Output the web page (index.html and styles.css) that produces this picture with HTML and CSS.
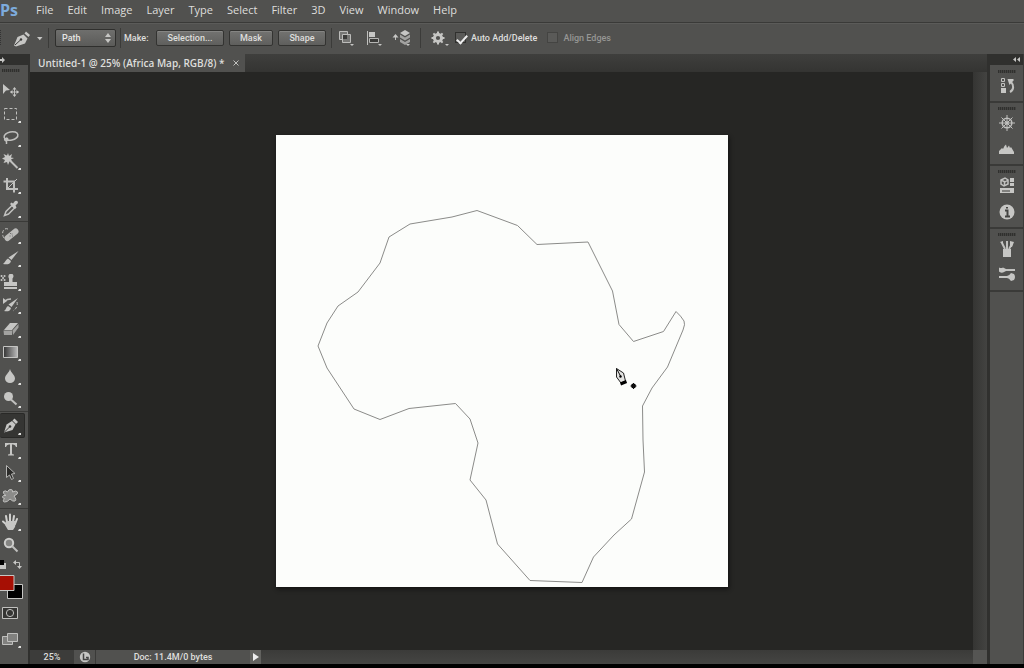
FILE: index.html
```html
<!DOCTYPE html>
<html lang="en">
<head>
<meta charset="utf-8">
<title>Untitled-1 @ 25%</title>
<link rel="stylesheet" href="styles.css">
</head>
<body>
<div class="app">
  <header class="menubar">
    <span class="logo">Ps</span>
    <nav class="menus">
      <button>File</button><button>Edit</button><button>Image</button><button>Layer</button><button>Type</button><button>Select</button><button>Filter</button><button>3D</button><button>View</button><button>Window</button><button>Help</button>
    </nav>
  </header>

  <div class="options">
    <button class="icon-btn current-tool" aria-label="Pen tool presets">
      <svg width="48" height="26" viewBox="0 0 48 26"><path class="grip" d="M0.5 5v16"/><path class="fill" d="M14 20.500l3.500-8.500 6-2.500 4 4-2.500 5-9 3z"/><path class="fill" d="M24.500 8.500l1.500-2 4 3.500-1.500 2z"/><path class="cut" d="M15 20l5.500-5"/><circle class="dark" cx="21" cy="14.500" r="1.200"/><path class="fill" d="M37 12h5.500l-2.700 3.200z"/></svg>
    </button>
    <span class="divider"></span>
    <select class="mode" aria-label="Pen mode"><option>Path</option></select>
    <svg class="stepper" width="6" height="10" viewBox="0 0 6 10"><path class="fill" d="M0 4l3-4 3 4zM0 6l3 4 3-4z"/></svg>
    <span class="divider thin"></span>
    <span class="make">Make:</span>
    <button class="push wide">Selection...</button>
    <button class="push">Mask</button>
    <button class="push shape">Shape</button>
    <span class="divider last"></span>
    <button class="icon-btn op" aria-label="Path operations">
      <svg width="28" height="24" viewBox="0 0 28 24"><path class="tile" d="M6.500 5.500h8v8h-8z"/><path class="tile" d="M9.500 8.500h8v8h-8z"/><path class="dark" d="M10 9h4v4h-4z"/><path class="fill" d="M17 18h4l-2 2z"/></svg>
    </button>
    <button class="icon-btn op" aria-label="Path alignment">
      <svg width="28" height="24" viewBox="0 0 28 24"><path class="line" d="M6.500 5v14"/><path class="fill" d="M8 6h6v5H8z"/><path class="dark edge" d="M8.500 12.500h9v4h-9z"/><path class="fill" d="M17 18h4l-2 2z"/></svg>
    </button>
    <button class="icon-btn op" aria-label="Path arrangement">
      <svg width="28" height="24" viewBox="0 0 28 24"><path class="fill" d="M11 7l5-3 5 3-5 3z"/><path class="mid-fill" d="M11 8.500l5 3 5-3v3l-5 3-5-3zM11 13l5 3 5-3v3l-5 3-5-3z"/><path class="line" d="M6.500 14v-4"/><path class="fill" d="M3.500 11.500l3-3.500 3 3.500z"/><path class="fill" d="M17 18h4l-2 2z"/></svg>
    </button>
    <span class="divider mid"></span>
    <button class="icon-btn op gear" aria-label="Path options">
      <svg width="28" height="24" viewBox="0 0 28 24"><g transform="translate(13 12)"><circle class="ring" r="3.600"/><path class="teeth" d="M0-6.500V-4M0 4V6.500M-6.500 0H-4M4 0H6.500M-4.600-4.600L-3-3M3 3L4.600 4.600M-4.600 4.600L-3 3M3-3L4.600-4.600"/></g><path class="fill" d="M20 18h4l-2 2z"/></svg>
    </button>
    <label class="check"><input type="checkbox" checked>Auto Add/Delete</label>
    <label class="check off"><input type="checkbox" disabled>Align Edges</label>
  </div>

  <div class="workspace">
    <aside class="tools" aria-label="Tools">
      <div class="tools-head"><svg width="5" height="6" viewBox="0 0 5 6"><path class="fill" d="M0 2h2V0l3 3-3 3V4H0z"/></svg></div>
      <div class="tools-grip"></div>
      <div class="group select-group">
        <button aria-label="Move"><svg viewBox="0 0 28 24"><path class="fill" d="M3 6l7 6-4 .5L3 16z"/><path class="line" d="M14.500 10v8M10.500 14h8"/><path class="fill" d="M14.500 9l2 2.500h-4zM14.500 19l2-2.500h-4zM10 14l2.500-2v4zM19 14l-2.500-2v4z"/></svg></button>
        <button aria-label="Marquee"><svg viewBox="0 0 28 24"><path class="line dashed" d="M4.500 6.500h12v11h-12z"/><path class="spot" d="M19 19h2v2h-3z"/></svg></button>
        <button aria-label="Lasso"><svg viewBox="0 0 28 24"><ellipse class="line bold" cx="11" cy="10" rx="7" ry="4.200" transform="rotate(-12 11 10)"/><path class="line bold" d="M5.500 12c-2 2 0 3.500 1.500 2.500s1-2-1-2.500M6.500 15v3"/><path class="spot" d="M19 19h2v2h-3z"/></svg></button>
        <button aria-label="Magic wand"><svg viewBox="0 0 28 24"><path class="fill" d="M8 4l1 3 3-2-1 3.500 3 .5-3 1.500 1.500 3-3-1L8 16l-1-3-3.500 1L5 11 2 9.500 5 8 3.500 5 7 6.500z"/><path class="line fat" d="M10.500 12l7 7"/><path class="spot" d="M19 19h2v2h-3z"/></svg></button>
        <button aria-label="Crop"><svg viewBox="0 0 28 24"><path class="line fat" d="M7 5v11h11M3.500 8.500H14v11"/><path class="line" d="M8 15l9-9"/><path class="spot" d="M19 19h2v2h-3z"/></svg></button>
        <button aria-label="Eyedropper"><svg viewBox="0 0 28 24"><path class="line bold" d="M4.500 18.500l1.500-4 6-6 2.500 2.500-6 6z"/><path class="fill" d="M10 7l1.500-1.500 1.500 1 2-2.500q3-1 3 2l-2.500 2.500 1 2L15 12z"/><path class="spot" d="M19 19h2v2h-3z"/></svg></button>
      </div>
      <div class="group paint-group">
        <button aria-label="Healing brush"><svg viewBox="0 0 28 24"><path class="line dashed" d="M8 6c-5-2-7 5-4 9"/><path class="band" d="M7.500 15l8-6.500"/><path class="dots" d="M10 13h.1M12 11h.1M12.500 13h.1M10.500 10.500h.1"/><path class="spot" d="M19 19h2v2h-3z"/></svg></button>
        <button aria-label="Brush"><svg viewBox="0 0 28 24"><path class="fill" d="M18.500 5l-7 9-3-2.500z"/><path class="fill" d="M8 12.500l3 2.500c-1 4-5 3.500-8 3 2-1 2.500-4.500 5-5.500z"/><path class="spot" d="M19 19h2v2h-3z"/></svg></button>
        <button aria-label="Clone stamp"><svg viewBox="0 0 28 24"><path class="fill" d="M9.500 4h3q2 2 0 4.500v3.500H17v4H4v-4h5V8.500Q7.500 6 9.500 4zM4 17h13v2H4z"/><path class="dots light" d="M1.500 6h.1M4.500 6h.1M3 8h.1M1.500 10h.1M4.500 10h.1"/><path class="spot" d="M19 19h2v2h-3z"/></svg></button>
        <button aria-label="History brush"><svg viewBox="0 0 28 24"><path class="fill" d="M18 5l-6.500 9-3-2.500z"/><path class="fill" d="M8 13l3 2c-1 4-4.500 3.500-7 3 2-1 2-4 4-5z"/><path class="line bold" d="M5 8c2-2 4-2 6-2"/><path class="fill" d="M3 5v6l4-3z"/><path class="line dashed" d="M17 9c1 4-1 7-4 9"/><path class="spot" d="M19 19h2v2h-3z"/></svg></button>
        <button aria-label="Eraser"><svg viewBox="0 0 28 24"><path class="fill" d="M10 6h8l-6 7H4z"/><path class="mid-fill" d="M3.500 13.500h8.500v4.500H4zM12.500 13.500l6-6.500v3.500L13 18z"/><path class="spot" d="M19 19h2v2h-3z"/></svg></button>
        <button aria-label="Gradient"><svg viewBox="0 0 28 24"><defs><linearGradient id="ramp"><stop offset="0" stop-color="#333"/><stop offset="1" stop-color="#bbb"/></linearGradient></defs><path d="M3.500 6.500h14v11h-14z" fill="url(#ramp)" stroke="#c4c4c2"/><path class="spot" d="M19 19h2v2h-3z"/></svg></button>
        <button aria-label="Blur"><svg viewBox="0 0 28 24"><path class="fill" d="M10 5c1 4 5 6 5 9.500a5 4.500 0 0 1-10 0C5 11 9 9 10 5z"/><path class="spot" d="M19 19h2v2h-3z"/></svg></button>
        <button aria-label="Dodge"><svg viewBox="0 0 28 24"><circle class="fill" cx="8.500" cy="9.500" r="4.500"/><path class="line fat" d="M11 12.500l5.500 5"/><path class="spot" d="M19 19h2v2h-3z"/></svg></button>
      </div>
      <div class="group vector-group">
        <button class="active" aria-label="Pen"><svg viewBox="0 0 28 24"><path class="fill" d="M4 18.500l2.500-8 5.500-3.500 3.500 3.500-3 5.500z"/><path class="fill" d="M12.500 6.500l2-2 3.500 3.500-2 2z"/><path class="cut" d="M4.500 18l5.500-5.500"/><circle class="dark" cx="10" cy="12.500" r="1.300"/><path class="spot" d="M19 19h2v2h-3z"/></svg></button>
        <button aria-label="Type"><svg viewBox="0 0 28 24"><path class="fill" d="M5 5h12v4h-1q-.5-2.500-3-2.500h-1v9q0 1 2 1v1H8v-1q2 0 2-1v-9H9q-2.500 0-3 2.500H5z"/><path class="spot" d="M19 19h2v2h-3z"/></svg></button>
        <button aria-label="Path selection"><svg viewBox="0 0 28 24"><path class="pointer" d="M6.500 4.500v12l3-2.500 2 4.500 2-1-2-4.500 3.500-.5z"/><path class="spot" d="M19 19h2v2h-3z"/></svg></button>
        <button aria-label="Custom shape"><svg viewBox="0 0 28 24"><path class="blob" d="M3.500 7.500q2-1.500 4 .5 1-3 3.500-2.500t1.500 2.500q4-2 5 0t-3.500 4q3 4 1 5t-5-2q-3 3.500-5.500 3T4.500 14.500Q2 14 2.500 12.500T6 11.500Q2 9 3.500 7.500z"/><path class="spot" d="M19 19h2v2h-3z"/></svg></button>
      </div>
      <div class="group view-group">
        <button aria-label="Hand"><svg viewBox="0 0 28 24"><path class="finger" d="M7 12L6 6M10 11V4.500M13 12l1-6M15 14l2-5M7 15l-4-3.500"/><path class="fill" d="M6 11h10l-1 6-2 3H8l-3-5z"/><path class="spot" d="M19 19h2v2h-3z"/></svg></button>
        <button aria-label="Zoom"><svg viewBox="0 0 28 24"><circle class="lens" cx="9" cy="10" r="4.200"/><path class="line fat" d="M12.500 13.500l5 5"/></svg></button>
      </div>
      <div class="color-box">
        <svg viewBox="0 0 28 42"><path class="fill" d="M2 5h4v6H0V7h2z"/><path d="M0 2h4v5H0z"/><path class="line" d="M15 4.500h4.500V9"/><path class="fill" d="M16 2v5l-3-2.500zM17 8h5l-2.500 3z"/><path class="swatch-line" d="M7.500 26.500h15v14h-15z" fill="#000"/><path class="swatch-line" d="M-2 17.500h16v15H-2z" fill="#a60f04"/></svg>
      </div>
      <button class="mode-btn" aria-label="Quick mask"><svg viewBox="0 0 28 24"><path class="mask-box" d="M2.500 6.500h15v11h-15z"/><circle class="line" cx="10" cy="12" r="3.600"/></svg></button>
      <button class="mode-btn" aria-label="Screen mode"><svg viewBox="0 0 28 24"><path class="screen" d="M2.500 9.500h10v8h-10z"/><path class="screen" d="M7.500 6.500h10v8h-10z"/><path class="spot" d="M19 19h2v2h-3z"/></svg></button>
    </aside>

    <main class="document">
      <div class="tabs"><div class="tab"><span>Untitled-1 @ 25% (Africa Map, RGB/8) *</span><button aria-label="Close"><svg width="6" height="6" viewBox="0 0 6 6"><path class="line" d="M.5.5l5 5M5.500.5l-5 5"/></svg></button></div></div>
      <div class="stage">
        <div class="pasteboard">
          <svg class="artboard" viewBox="276 135 452 452" role="img" aria-label="Outline of Africa">
            <path class="outline" d="M477 210.500L452 217 410 224 389 237 380 263 358 292 338 306 327 323 318 346 327 368 354 409 380 419.500 409 408.500 455.500 403.500 470 419 478 443 470 480 486 500 497.500 544 530 580.500 582 582.500 593.500 557 614 535 631.500 519 644.500 472 643 440 642.500 406 652 388 667.500 367 683 330Q685.500 324 684 321 681 316 676 311.500L663.500 331.500 633.500 341.500 619 324.500 612.500 291 588 242 537 244.500 517.500 225.500z"/>
            <path class="cursor" d="M616.500 368.500l7 4.500 2 8-4.500 2-4.500-6z"/><path class="cursor-line" d="M616.500 368.500l4 7.500"/><circle cx="620.500" cy="376.500" r="1.200"/><path class="cursor-base" d="M620.500 384l6-2.500"/>
            <circle cx="633.500" cy="386" r="2.400"/><path class="cursor-line" d="M630.500 386h6M633.500 383v6"/>
          </svg>
        </div>
        <div class="v-scroll"></div>
      </div>
      <footer class="status">
        <span class="zoom">25%</span>
        <button class="share" aria-label="Share"><svg width="12" height="12" viewBox="0 0 12 12"><circle cx="6" cy="6" r="5.200" class="fill"/><path class="badge-mark" d="M4.500 2.500v6h4.500V6.500H7"/></svg></button>
        <span class="doc">Doc: 11.4M/0 bytes</span>
        <button class="arrow" aria-label="Status options"><svg width="6" height="8" viewBox="0 0 6 8"><path class="bright" d="M0 0l6 4-6 4z"/></svg></button>
        <span class="h-scroll"></span><span class="corner"></span>
      </footer>
    </main>

    <aside class="panels" aria-label="Panels">
      <div class="panels-head"><svg width="7" height="5" viewBox="0 0 7 5"><path class="fill" d="M3 0v5L0 2.500zM7 0v5L4 2.500z"/></svg></div>
      <div class="dock one"><button aria-label="History"><svg viewBox="0 0 34 26"><path class="line" d="M11.500 5.500h3v3h-3zM11.500 10.500h3v3h-3z"/><path class="fill" d="M11 15h5v5h-5z"/><path class="line fat" d="M20 19c4-2 4-7 1-10"/><path class="fill" d="M17.500 6h6v1.500l-4 4.500z"/></svg></button></div>
      <div class="dock"><button aria-label="Navigator"><svg viewBox="0 0 34 26"><circle class="line bold" cx="17" cy="13" r="4.800"/><circle class="fill" cx="17" cy="13" r="1.800"/><path class="line" d="M17 5v16M9 13h16M11.500 7.500l11 11M22.500 7.500l-11 11"/></svg></button><button aria-label="Histogram"><svg viewBox="0 0 34 26"><path class="fill" d="M9 18v-3l3-3 1 1 1.500-3 1.500-1.500 1 3.500 2-2.500 1 2.500 1-1 3 5v2z"/></svg></button></div>
      <div class="dock"><button aria-label="Properties"><svg viewBox="0 0 34 26"><path class="line bold" d="M11 7l4-2 3 2v4l-4 2-3-2zM11 7l4 2 3-2M14.500 9v3"/><path class="fill" d="M20 5h4v4h-4zM20 10h4v3h-4zM10 15h14v5H10z"/><path class="cut" d="M12 18h8"/></svg></button><button aria-label="Info"><svg viewBox="0 0 34 26"><circle class="fill" cx="17" cy="13" r="7.500"/><path class="info-mark" d="M17 8v1.500M15 11.500h2.500V17M15 17.500h5"/></svg></button></div>
      <div class="dock"><button aria-label="Brush presets"><svg viewBox="0 0 34 26"><path class="fill" d="M13 13h8v8h-8z"/><path class="line fat" d="M15 13l-3-6M17 13V5M19 13l3-5"/><path class="fill" d="M20 5l4 1-2 5h-2zM10 6l3-1v4z"/></svg></button><button aria-label="Brush"><svg viewBox="0 0 34 26"><path class="line fat" d="M14 8h11"/><path class="fill" d="M9 5.500q2 1 4 0l3 1.500v2l-3 1.500q-3 .5-4-1zM9 14h8q2 0 4-3l3 1q2 3 0 6l-3 1q-2-3-4-3H9z"/></svg></button></div>
    </aside>
  </div>
  <div class="bottom-edge"></div>
</div>
</body>
</html>
```
FILE: styles.css
```css
* { box-sizing: border-box; }
body { margin: 0; background: #000; color: #dededc; font: 11px "Open Sans", "Noto Sans", sans-serif; }
button { margin: 0; padding: 0; border: 0; background: none; color: inherit; font: inherit; }
svg { display: block; overflow: hidden; }

.app { display: flex; flex-direction: column; height: 100vh; }
.menubar { display: flex; align-items: center; height: 23px; padding-bottom: 2px; background: #51514f; border-bottom: 1px solid #3a3a38; }
.logo { width: 36px; color: #7dabdc; font: bold 16px/20px "Open Sans", sans-serif; }
.menus { display: flex; gap: 14px; line-height: 20px; }

.options { display: flex; align-items: center; height: 31px; padding-bottom: 3px; background: #51514f; border-top: 1px solid #5b5b59; font: 500 9px Roboto, sans-serif; }
.divider { width: 1px; height: 20px; margin-right: 6px; background: #3b3b39; }
.mode { appearance: none; width: 61px; height: 18px; padding: 0 6px; border: 1px solid #2f2f2d; border-radius: 2px; background: linear-gradient(#6f6f6d, #5b5b59); color: #e6e6e4; font: inherit; }
.stepper { margin-left: -11px; margin-right: 9px; pointer-events: none; }
.divider.thin { margin-right: 3px; }
.make { width: 32px; }
.push { width: 44px; height: 16px; margin-right: 5px; border: 1px solid #333331; border-radius: 2px; background: linear-gradient(#737371, #5f5f5d); box-shadow: inset 0 1px #858583; }
.push.shape { width: 48px; }
.push.wide { width: 68px; }
.divider.last { margin: 0 1px 0 0; }
.op { width: 28px; }
.divider.mid { margin-right: 4px; margin-left: 3px; }
.gear { margin-right: 2px; }
.check { display: flex; align-items: center; gap: 5px; margin-right: 10px; }
.check input { appearance: none; display: grid; place-items: center; width: 11px; height: 11px; margin: 0; border: 1px solid #30302e; background: #5a5a58; }
.check input:checked::after { content: ""; width: 4px; height: 9px; margin-bottom: 8px; margin-left: 3px; border: solid #eee; border-width: 0 2px 2px 0; transform: rotate(42deg); }
.check.off { color: #969694; }
.check.off input { border-color: #444442; background: #5a5a58; }

.workspace { display: flex; flex: 1; min-height: 0; background: #30302e; }
.tools { display: flex; flex-direction: column; width: 28px; margin-right: 2px; background: #51514f; }
.tools-head { display: flex; align-items: center; height: 11px; background: #30302e; }
.tools-grip { width: 18px; height: 3px; margin: 4px 2px 6px; background: repeating-linear-gradient(90deg, #30302e 0 1px, #454543 1px 2px); }
.group { display: flex; flex-direction: column; border-bottom: 1px solid #3a3a38; margin-bottom: 1px; }
.group button { display: flex; flex: 1; align-items: center; min-height: 0; }
.tools svg { flex: none; width: 28px; height: 24px; }
.tools .tools-head svg { width: 5px; height: 6px; }
.select-group { height: 144px; }
.paint-group { height: 189px; }
.vector-group { height: 96px; }
.view-group { height: 47px; border: 0; }
.group .active { width: 25px; border: 1px solid #292927; border-left: 0; border-radius: 2px; background: #353533; }
.tools .color-box svg { height: 42px; }
.mode-btn { height: 26px; }

.document { display: flex; flex: 1; flex-direction: column; min-width: 0; }
.tabs { display: flex; height: 18px; background: linear-gradient(#3f3f3d, #343432); }
.tab { display: flex; align-items: center; gap: 8px; padding: 0 6px 0 8px; background: #51514f; font-size: 10px; font-weight: 600; }
.stage { display: flex; flex: 1; min-height: 0; }
.pasteboard { display: grid; flex: 1; place-items: center; background: #262624; }
.artboard { width: 452px; height: 452px; background: #fcfdfb; box-shadow: 1px 2px 4px #111; }
.v-scroll { width: 14px; background: linear-gradient(90deg, #353533, #434341); }
.status { display: flex; height: 14px; background: #444442; font: 500 9px/15px Roboto, sans-serif; }
.zoom { width: 44px; text-align: center; background: #3c3c3a; }
.share { display: grid; place-items: center; width: 22px; background: #51514f; border-right: 1px solid #3a3a38; }
.doc { width: 154px; text-align: center; background: #51514f; }
.arrow { display: grid; place-items: center; width: 11px; background: #62625f; }
.h-scroll { flex: 1; background: linear-gradient(#3b3b39, #454543); }
.corner { width: 14px; background: #555553; }

.panels { display: flex; flex-direction: column; width: 34px; margin-left: 3px; background: #51514f; border-right: 1px solid #3a3a38; }
.panels-head { display: flex; align-items: center; justify-content: flex-end; height: 11px; padding-right: 3px; background: #30302e; }
.dock { padding: 2px 0; border-bottom: 2px solid #3a3a38; }
.dock::before { content: ""; display: block; width: 18px; height: 3px; margin: 2px 8px 0; background: repeating-linear-gradient(90deg, #30302e 0 1px, #434341 1px 2px); }
.dock.one { padding-top: 3px; }
.dock button { display: block; width: 33px; }
.dock svg { width: 34px; height: 26px; }
.bottom-edge { height: 4px; background: #000; }

.fill { fill: #c6c6c4; }
.bright { fill: #eee; }
.mid-fill { fill: #a2a2a0; }
.dark { fill: #3b3b39; }
.edge { stroke: #b5b5b3; }
.line { fill: none; stroke: #c0c0be; }
.bold { stroke-width: 1.5; }
.fat { stroke-width: 2; }
.dashed { stroke-dasharray: 3 2; }
.tile { fill: #777775; stroke: #bcbcba; }
.grip { stroke: #333; stroke-dasharray: 1 1; }
.cut { fill: none; stroke: #3b3b39; }
.ring { fill: none; stroke: #c6c6c4; stroke-width: 3; }
.teeth { stroke: #c6c6c4; stroke-width: 2; }
.spot { fill: #e0e0de; }
.band { stroke: #bbbbb9; stroke-width: 6; stroke-linecap: round; }
.dots { stroke: #666; stroke-linecap: round; }
.dots.light { stroke: #c6c6c4; stroke-width: 2; }
.pointer { fill: #2b2b29; stroke: #b5b5b3; }
.blob { fill: #8b8b89; stroke: #c0c0be; }
.finger { fill: none; stroke: #d0d0ce; stroke-width: 2; stroke-linecap: round; }
.lens { fill: #858583; stroke: #cececc; stroke-width: 2; }
.swatch-line { stroke: #c6c6c4; }
.mask-box { fill: #353533; stroke: #c0c0be; }
.screen { fill: #81817f; stroke: #c0c0be; }
.badge-mark { fill: none; stroke: #444; stroke-width: 1.5; }
.info-mark { fill: none; stroke: #444442; stroke-width: 2; }
.outline { fill: none; stroke: #8b8b89; stroke-width: 1; }
.cursor { fill: #e2e2e0; stroke: #222; }
.cursor-line { stroke: #111; }
.cursor-base { stroke: #000; stroke-width: 3; }
```
